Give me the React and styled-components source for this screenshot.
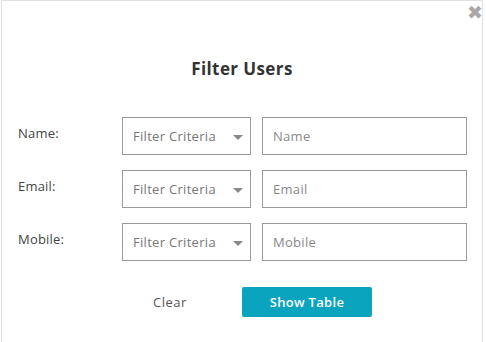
import React from 'react';
import styled, { createGlobalStyle } from 'styled-components';

const GlobalStyle = createGlobalStyle`
  html, body {
    margin: 0;
    padding: 0;
    background: #fff;
    font-family: "Open Sans", "Liberation Sans", sans-serif;
  }
`;

const Page = styled.div`
  height: 342px;
  overflow: hidden;
  padding-left: 1px;
`;

const Modal = styled.div`
  position: relative;
  width: 482px;
  height: 360px;
  border: 1px solid #e2e2e2;
  background: #fff;
  box-sizing: border-box;
  padding: 55px 0 0 16px;
`;

const Close = styled.button`
  position: absolute;
  top: 2px;
  right: -1px;
  border: none;
  background: none;
  padding: 0;
  color: #a8a8a8;
  font-size: 19px;
  font-weight: 700;
  line-height: 19px;
  cursor: pointer;
  font-family: "DejaVu Sans", sans-serif;
`;

const Title = styled.h2`
  margin: 0 0 35px;
  text-align: center;
  padding-right: 16px;
  font-size: 17px;
  font-weight: 700;
  letter-spacing: 0.4px;
  color: #333;
  line-height: 26px;
`;

const Form = styled.div`
  display: grid;
  grid-template-columns: 93px 129px 205px;
  column-gap: 11px;
  row-gap: 15px;
`;

const Label = styled.label`
  font-size: 13px;
  letter-spacing: 0.2px;
  color: #444;
  padding-top: 7px;
`;

const Select = styled.div`
  height: 38px;
  box-sizing: border-box;
  border: 1px solid #999;
  display: flex;
  align-items: center;
  justify-content: space-between;
  padding: 0 7px 0 10px;
  font-size: 13px;
  letter-spacing: 0.3px;
  color: #777;
`;

const Caret = styled.span`
  width: 0;
  height: 0;
  border-left: 5px solid transparent;
  border-right: 5px solid transparent;
  border-top: 5px solid #888;
  margin-top: 2px;
`;

const Input = styled.input`
  height: 38px;
  box-sizing: border-box;
  border: 1px solid #999;
  padding: 0 10px;
  font-family: inherit;
  font-size: 13px;
  letter-spacing: 0.3px;
  color: #333;
  outline: none;
  &::placeholder {
    color: #888;
  }
`;

const Actions = styled.div`
  display: flex;
  align-items: center;
  margin-top: 26px;
  padding-left: 135px;
`;

const ClearButton = styled.button`
  border: none;
  background: none;
  font-family: inherit;
  font-size: 13px;
  letter-spacing: 0.5px;
  color: #555;
  padding: 0;
  width: 53px;
  text-align: left;
  cursor: pointer;
`;

const PrimaryButton = styled.button`
  height: 30px;
  width: 130px;
  margin-left: 36px;
  border: none;
  border-radius: 2px;
  background: #0aa4bf;
  color: #fff;
  font-family: inherit;
  font-size: 13px;
  font-weight: 600;
  letter-spacing: 0.3px;
  cursor: pointer;
`;

const fields = [
  { label: 'Name:', placeholder: 'Name' },
  { label: 'Email:', placeholder: 'Email' },
  { label: 'Mobile:', placeholder: 'Mobile' },
];

const App = () => {
  return (
    <>
      <GlobalStyle />
      <Page>
        <Modal>
          <Close aria-label="close">✖</Close>
          <Title>Filter Users</Title>
          <Form>
            {fields.map((f) => (
              <React.Fragment key={f.label}>
                <Label>{f.label}</Label>
                <Select>
                  Filter Criteria
                  <Caret />
                </Select>
                <Input placeholder={f.placeholder} />
              </React.Fragment>
            ))}
          </Form>
          <Actions>
            <ClearButton>Clear</ClearButton>
            <PrimaryButton>Show Table</PrimaryButton>
          </Actions>
        </Modal>
      </Page>
    </>
  );
};

export default App;
